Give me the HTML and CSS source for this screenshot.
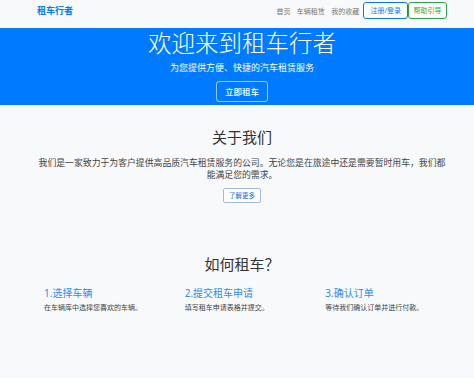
FILE: index.html
```html
<!DOCTYPE html>
<html lang="zh-CN">
<head>
    <meta charset="UTF-8">
    <meta name="viewport" content="width=device-width, initial-scale=1.0">
    <title>租车行者</title>
    <link rel="stylesheet" href="styles.css">
</head>
<body>
    <div class="page">
        <nav class="navbar">
            <div class="nav-inner">
                <a href="#" class="brand">租车行者</a>
                <div class="nav-links">
                    <a href="#">首页</a>
                    <a href="#">车辆租赁</a>
                    <a href="#">我的收藏</a>
                </div>
                <a href="#" class="btn btn-primary">注册/登录</a>
                <a href="#" class="btn btn-success">帮助引导</a>
            </div>
        </nav>

        <header class="hero">
            <h1>欢迎来到租车行者</h1>
            <p>为您提供方便、快捷的汽车租赁服务</p>
            <a href="#" class="hero-btn">立即租车</a>
        </header>

        <main class="content">
            <section class="about">
                <h2>关于我们</h2>
                <p>我们是一家致力于为客户提供高品质汽车租赁服务的公司。无论您是在旅途中还是需要暂时用车，我们都能满足您的需求。</p>
                <a href="#" class="more-btn">了解更多</a>
            </section>

            <section class="how">
                <h2>如何租车？</h2>
                <div class="steps">
                    <div class="step">
                        <h3>1.选择车辆</h3>
                        <p>在车辆库中选择您喜欢的车辆。</p>
                    </div>
                    <div class="step">
                        <h3>2.提交租车申请</h3>
                        <p>填写租车申请表格并提交。</p>
                    </div>
                    <div class="step">
                        <h3>3.确认订单</h3>
                        <p>等待我们确认订单并进行付款。</p>
                    </div>
                </div>
            </section>
        </main>
    </div>
</body>
</html>
```

FILE: styles.css
```css
html {
    overflow-x: hidden;
}
body {
    margin: 0;
    padding: 0;
    background-color: #fff;
    font-family: "Noto Sans", "Noto Sans CJK SC", sans-serif;
    color: #333;
}
a {
    text-decoration: none;
}
.page {
    width: 484px;
}

/* navbar */
.navbar {
    height: 28px;
    box-sizing: border-box;
    padding-top: 2px;
    background-color: #f8f9fa;
}
.nav-inner {
    width: 410px;
    height: 17px;
    margin: 0 auto;
    display: flex;
    align-items: center;
}
.brand {
    font-size: 9px;
    font-weight: bold;
    color: #007bff;
    line-height: 17px;
}
.nav-links {
    margin-left: auto;
    margin-right: 1px;
    display: flex;
}
.nav-links a {
    font-size: 7px;
    color: #777;
    padding: 0 3.2px;
}
.btn {
    font-size: 7px;
    line-height: 15px;
    padding: 0 6px;
    border: 1px solid;
    border-radius: 3px;
    background-color: #fff;
}
.btn-primary {
    color: #007bff;
    border-color: #007bff;
}
.btn-success {
    color: #28a745;
    border-color: #28a745;
    padding: 0 4.5px;
}

/* hero */
.hero {
    height: 77px;
    box-sizing: border-box;
    padding-top: 1px;
    background-color: #007bff;
    color: #fff;
    text-align: center;
}
.hero h1 {
    margin: 0;
    font-size: 23.5px;
    line-height: 28px;
    font-weight: 300;
}
.hero p {
    margin: 4px 0 0;
    font-size: 9px;
    line-height: 13px;
}
.hero-btn {
    display: inline-block;
    margin-top: 7px;
    padding: 4px 8px;
    font-size: 8.5px;
    line-height: 11px;
    color: #fff;
    font-weight: 500;
    border: 1px solid rgba(255, 255, 255, 0.6);
    border-radius: 3px;
}

/* content */
.content {
    height: 273px;
    background-color: #f8f9fb;
    text-align: center;
}
h2 {
    margin: 0;
    font-size: 15px;
    line-height: 20px;
    font-weight: 400;
    color: #333;
}
.about {
    padding-top: 22px;
}
.about p {
    width: 412px;
    margin: 10px auto 0;
    font-family: "Noto Sans CJK SC", sans-serif;
    font-size: 8.85px;
    line-height: 12px;
    color: #444;
}
.more-btn {
    display: inline-block;
    margin-top: 6px;
    padding: 2px 5px;
    font-size: 6.5px;
    line-height: 9px;
    font-weight: 500;
    color: #3a7fd8;
    border: 1px solid #9fbbe0;
    border-radius: 2px;
    background-color: #fff;
}
.how {
    margin-top: 51px;
}
.steps {
    width: 422px;
    margin: 12px auto 0;
    display: grid;
    grid-template-columns: repeat(3, 1fr);
    text-align: left;
}
.step {
    padding-left: 13px;
}
.step h3 {
    margin: 0;
    font-size: 10px;
    line-height: 14px;
    font-weight: 400;
    color: #2f8cf0;
}
.step p {
    margin: 3px 0 0;
    font-size: 7px;
    line-height: 10px;
    color: #444;
}
```
